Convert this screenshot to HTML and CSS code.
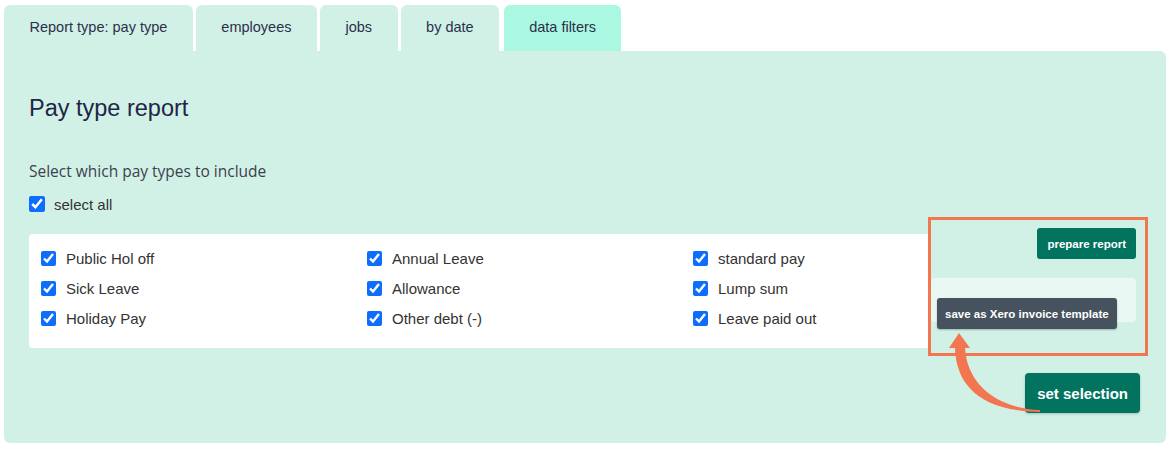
FILE: index.html
```html
<!DOCTYPE html>
<html lang="en">
<head>
    <meta charset="UTF-8">
    <title>Pay type report</title>
    <link rel="stylesheet" href="styles.css">
</head>
<body>

<div class="page">
    <div class="tabs">
        <div class="tab">Report type: pay type</div>
        <div class="tab">employees</div>
        <div class="tab">jobs</div>
        <div class="tab">by date</div>
        <div class="tab tab-active">data filters</div>
    </div>

    <div class="panel">
        <h1>Pay type report</h1>
        <p class="intro">Select which pay types to include</p>
        <label class="check select-all"><input type="checkbox" checked> select all</label>

        <div class="row">
            <div class="types">
                <label class="check"><input type="checkbox" checked> Public Hol off</label>
                <label class="check"><input type="checkbox" checked> Annual Leave</label>
                <label class="check"><input type="checkbox" checked> standard pay</label>
                <label class="check"><input type="checkbox" checked> Sick Leave</label>
                <label class="check"><input type="checkbox" checked> Allowance</label>
                <label class="check"><input type="checkbox" checked> Lump sum</label>
                <label class="check"><input type="checkbox" checked> Holiday Pay</label>
                <label class="check"><input type="checkbox" checked> Other debt (-)</label>
                <label class="check"><input type="checkbox" checked> Leave paid out</label>
            </div>
            <div class="actions">
                <button class="btn btn-green">prepare report</button>
                <div class="template-row">
                    <button class="btn btn-slate">save as Xero invoice template</button>
                </div>
            </div>
        </div>

        <div class="footer">
            <button class="btn btn-green btn-big">set selection</button>
        </div>
    </div>

    <!-- annotation -->
    <div class="highlight"></div>
    <svg class="arrow" width="110" height="95" viewBox="0 0 110 95">
        <path d="M19 8 L30 23 L25 23 C27 58 55 83 100 85 L100 87 C40 86 16 60 15 23 L9 23 Z" fill="#f47650"/>
    </svg>
</div>

</body>
</html>
```

FILE: styles.css
```css
body {
    margin: 0;
    background-color: #fff;
    font-family: "Liberation Sans", Arial, sans-serif;
    color: #333;
}
.page {
    position: relative;
    padding: 5px 4px;
    width: 1162px;
}
.tabs {
    display: flex;
    gap: 3px;
}
.tab {
    height: 46px;
    line-height: 44px;
    padding: 0 25.5px;
    background-color: #d2f1e6;
    border-radius: 6px 6px 0 0;
    font-size: 14.5px;
    color: #2b2f4c;
}
.tab-active {
    background-color: #abf8e2;
    margin-left: 2px;
    padding: 0 25px;
}
.panel {
    background-color: #d2f1e6;
    border-radius: 0 6px 6px 6px;
    padding: 44px 25px 30px;
}
h1 {
    margin: 0;
    font-size: 23.5px;
    font-weight: normal;
    line-height: 26px;
    color: #1f2547;
}
.intro {
    margin: 39px 0 0;
    font-family: "Open Sans", sans-serif;
    font-size: 15.5px;
    line-height: 22px;
    color: #3b4050;
}
.check {
    display: flex;
    align-items: center;
    gap: 10px;
    font-size: 15px;
    height: 30px;
}
.check input {
    width: 15px;
    height: 15px;
    margin: 0;
    accent-color: #0d6efd;
}
.select-all {
    margin-top: 12px;
    height: 20px;
    gap: 9px;
}
.select-all input {
    width: 16px;
    height: 16px;
}
.row {
    display: flex;
    margin-top: 20px;
}
.types {
    width: 899px;
    background-color: #fff;
    border-radius: 4px 0 0 4px;
    padding: 9px 0 15px 12px;
    box-sizing: border-box;
    display: grid;
    grid-template-columns: 326px 326px 1fr;
}
.actions {
    flex: 1;
    display: flex;
    flex-direction: column;
    align-items: flex-end;
    margin-top: -6px;
}
.template-row {
    align-self: stretch;
    height: 44px;
    margin: 19px 5px 0 3px;
    padding: 20px 0 0 6px;
    box-sizing: border-box;
    background-color: #e9f8f2;
    border-radius: 4px;
}
.btn {
    border: none;
    border-radius: 3px;
    color: #fff;
    font-family: "Liberation Sans", Arial, sans-serif;
    font-weight: bold;
    font-size: 11.5px;
    height: 31px;
    padding: 0 10px;
    cursor: pointer;
}
.btn-green {
    background-color: #02735f;
    margin-right: 5px;
}
.btn-slate {
    background-color: #46535e;
    padding: 0 8px;
    box-shadow: 0 1px 2px rgba(0, 0, 0, 0.25);
}
.footer {
    display: flex;
    justify-content: flex-end;
    margin-top: 25px;
}
.btn-big {
    font-size: 15px;
    height: 40px;
    padding: 0 12px;
    margin-right: 1px;
    border-radius: 4px;
    box-shadow: 0 1px 3px rgba(0, 0, 0, 0.2);
}
.highlight {
    position: absolute;
    left: 928px;
    top: 217px;
    width: 214px;
    height: 133px;
    border: 3px solid #f47650;
}
.arrow {
    position: absolute;
    left: 940px;
    top: 325px;
}
```
